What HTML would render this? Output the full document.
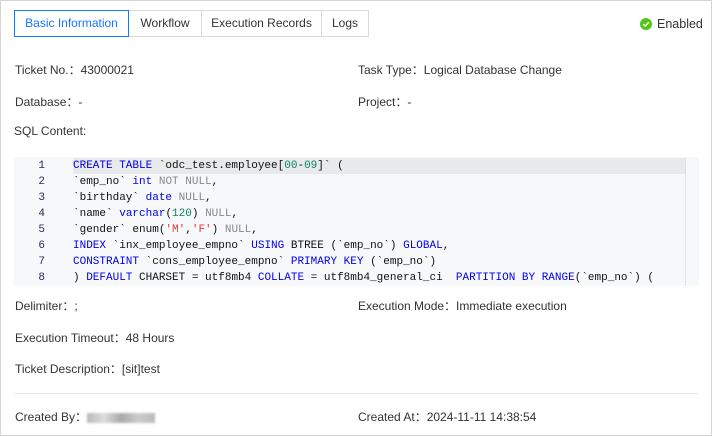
<!DOCTYPE html>
<html><head><meta charset="utf-8"><style>
*{margin:0;padding:0;box-sizing:border-box}
body{width:712px;height:436px;background:#fff;font-family:"Liberation Sans",sans-serif;font-size:12px;color:#333;position:relative;overflow:hidden}
.frame{position:absolute;left:0;top:0;width:712px;height:436px;border:1px solid #d4d4d4}
.tabs{position:absolute;left:14px;top:10px;height:27px;display:flex}
.tab{height:27px;line-height:25px;border:1px solid #d9d9d9;border-left:none;text-align:center;color:#333;font-size:12px}
.tab.a{border:1px solid #1677ff;color:#1677ff}
.en{position:absolute;left:640px;top:17px;display:flex;align-items:center;font-size:12.5px;color:#333}
.t{position:absolute;white-space:nowrap}
.code{position:absolute;left:14px;top:157px;width:685px;height:129px;background:#f7f8fa;font-family:"Liberation Mono",monospace;font-size:11px}
.hl{position:absolute;left:59px;top:1px;width:612px;height:16px;background:#e8e9eb}
.sb{position:absolute;left:671px;top:0;width:1px;height:129px;background:#e2e2e2}
.ln{position:absolute;left:0;width:31px;text-align:right;color:#2a2a5a;line-height:16px}
.cl{position:absolute;left:59px;line-height:16px;white-space:pre;color:#111}
.k{color:#0000e6}.g{color:#888}.s{color:#e53935}.n{color:#098658}
.div{position:absolute;left:14px;top:393px;width:685px;height:1px;background:#e8e8e8}
.blur{display:inline-block;width:68px;height:10px;background:linear-gradient(90deg,#bbb,#ddd,#aaa,#ccc,#bbb);filter:blur(1px);vertical-align:middle}
</style></head><body>
<div class="frame"></div>
<div class="tabs">
<div class="tab a" style="width:115px">Basic Information</div>
<div class="tab" style="width:73px">Workflow</div>
<div class="tab" style="width:120px">Execution Records</div>
<div class="tab" style="width:47px">Logs</div>
</div>
<div class="en"><svg width="12" height="12" viewBox="0 0 12 12" style="margin-right:5px"><circle cx="6" cy="6" r="6" fill="#52c41a"/><path d="M3.2 6.2 5.2 8 8.8 4.3" stroke="#fff" stroke-width="1.5" fill="none"/></svg>Enabled</div>
<div class="t" style="left:15px;top:61px">Ticket No.：43000021</div>
<div class="t" style="left:358px;top:61px">Task Type：Logical Database Change</div>
<div class="t" style="left:15px;top:93px">Database：-</div>
<div class="t" style="left:358px;top:93px">Project：-</div>
<div class="t" style="left:14px;top:124px">SQL Content:</div>
<div class="code">
<div class="hl"></div><div class="sb"></div>
<div class="ln" style="top:1px">1</div><div class="cl" style="top:1px"><span class="k">CREATE TABLE</span> `odc_test.employee[<span class="n">00</span>-<span class="n">09</span>]` (</div>
<div class="ln" style="top:17px">2</div><div class="cl" style="top:17px">`emp_no` <span class="k">int</span> <span class="g">NOT NULL</span>,</div>
<div class="ln" style="top:33px">3</div><div class="cl" style="top:33px">`birthday` <span class="k">date</span> <span class="g">NULL</span>,</div>
<div class="ln" style="top:49px">4</div><div class="cl" style="top:49px">`name` <span class="k">varchar</span>(<span class="n">120</span>) <span class="g">NULL</span>,</div>
<div class="ln" style="top:65px">5</div><div class="cl" style="top:65px">`gender` enum(<span class="s">'M'</span>,<span class="s">'F'</span>) <span class="g">NULL</span>,</div>
<div class="ln" style="top:81px">6</div><div class="cl" style="top:81px"><span class="k">INDEX</span> `inx_employee_empno` <span class="k">USING</span> BTREE (`emp_no`) <span class="k">GLOBAL</span>,</div>
<div class="ln" style="top:97px">7</div><div class="cl" style="top:97px"><span class="k">CONSTRAINT</span> `cons_employee_empno` <span class="k">PRIMARY KEY</span> (`emp_no`)</div>
<div class="ln" style="top:113px">8</div><div class="cl" style="top:113px">) <span class="k">DEFAULT</span> CHARSET = utf8mb4 <span class="k">COLLATE</span> = utf8mb4_general_ci  <span class="k">PARTITION BY RANGE</span>(`emp_no`) (</div>
</div>
<div class="t" style="left:15px;top:297px">Delimiter：;</div>
<div class="t" style="left:358px;top:297px">Execution Mode：Immediate execution</div>
<div class="t" style="left:15px;top:329px">Execution Timeout：48 Hours</div>
<div class="t" style="left:15px;top:360px">Ticket Description：[sit]test</div>
<div class="div"></div>
<div class="t" style="left:15px;top:408px">Created By：<span class="blur"></span></div>
<div class="t" style="left:358px;top:408px">Created At：2024-11-11 14:38:54</div>
</body></html>
